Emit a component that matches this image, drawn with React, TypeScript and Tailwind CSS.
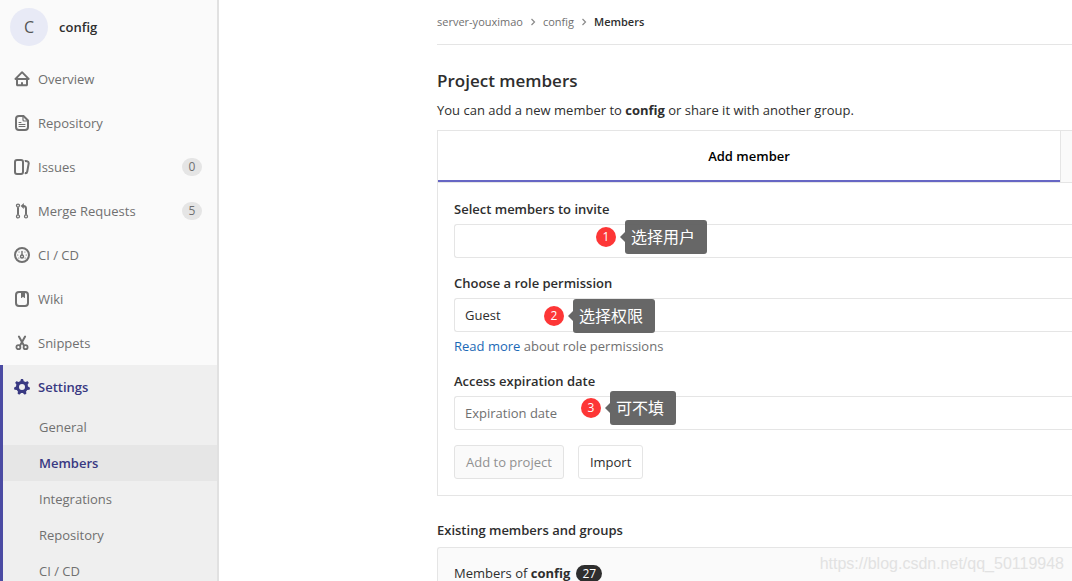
import type { ReactNode } from "react";

const icons: Record<string, ReactNode> = {
  home: (
    <path
      fill="currentColor"
      d="M3.706 7h8.725L8.069 2.585 3.706 7zM7 13.369V12a1 1 0 0 1 2 0v1.369h3V9H4v4.369h3zM14 9v4.836c0 .833-.657 1.533-1.5 1.533h-9c-.843 0-1.5-.7-1.5-1.533V9h-.448a1.1 1.1 0 0 1-.783-1.873L6.934.887a1.5 1.5 0 0 1 2.269 0l6.165 6.24A1.1 1.1 0 0 1 14.585 9H14z"
    />
  ),
  doc: (
    <g fill="none" stroke="currentColor">
      <path strokeWidth="2" d="M9.500 1H5a3 3 0 0 0-3 3v8a3 3 0 0 0 3 3h6a3 3 0 0 0 3-3V5.500z" />
      <path strokeWidth="1.200" d="M9 1.500V5a1 1 0 0 0 1 1h3.500" />
      <path strokeWidth="1" strokeLinecap="round" d="M5 7.500h2M5 9.500h6M5 11.500h6" />
    </g>
  ),
  issues: (
    <path
      fill="currentColor"
      d="M10.458 15.012l.311.055a3 3 0 0 0 3.476-2.433l1.389-7.879A3 3 0 0 0 13.2 1.28L11.23.933a3.002 3.002 0 0 0-.824-.031c.364.59.58 1.28.593 2.02l1.854.328a1 1 0 0 1 .811 1.158l-1.389 7.879a1 1 0 0 1-1.158.81l-.118-.02a3.98 3.98 0 0 1-.541 1.935zM3 0h4a3 3 0 0 1 3 3v10a3 3 0 0 1-3 3H3a3 3 0 0 1-3-3V3a3 3 0 0 1 3-3zm0 2a1 1 0 0 0-1 1v10a1 1 0 0 0 1 1h4a1 1 0 0 0 1-1V3a1 1 0 0 0-1-1H3z"
    />
  ),
  merge: (
    <g fill="none" stroke="currentColor">
      <g strokeWidth="1.300">
        <circle cx="4" cy="2.600" r="1.500" />
        <circle cx="4" cy="13.400" r="1.500" />
        <circle cx="12" cy="13.400" r="1.500" />
      </g>
      <path strokeWidth="2" d="M4 4.200v7.600M12 11.800V5.500a2.500 2.500 0 0 0-2.500-2.500H9" />
      <path fill="currentColor" stroke="none" d="M9.800 0v6L6.600 3z" />
    </g>
  ),
  gauge: (
    <g fill="none" stroke="currentColor">
      <circle cx="8" cy="8" r="7" strokeWidth="2" />
      <path strokeWidth="1.400" strokeLinecap="round" d="M8 4.500v3.200" />
      <circle cx="8" cy="9.500" r="1.500" strokeWidth="1.400" />
      <path
        strokeWidth="1.200"
        strokeLinecap="round"
        d="M3.700 8h.1M12.200 8h.1M5 5h.1M10.900 5h.1M4.800 11h.1M11.100 11h.1"
      />
    </g>
  ),
  wiki: (
    <g>
      <rect x="2" y="1" width="12" height="14" rx="3" fill="none" stroke="currentColor" strokeWidth="2" />
      <path fill="currentColor" d="M7 1h4v5.600a.4.4 0 0 1-.7.3L9 5.700 7.700 6.900A.4.4 0 0 1 7 6.600z" />
    </g>
  ),
  scissors: (
    <g fill="none" stroke="currentColor">
      <path strokeWidth="2" strokeLinecap="round" d="M4.900 1.600l4.900 8.600M11.100 1.600L6.200 10.200" />
      <circle cx="4.400" cy="12.200" r="2" strokeWidth="1.800" />
      <circle cx="11.600" cy="12.200" r="2" strokeWidth="1.800" />
    </g>
  ),
  settings: (
    <path
      fill="currentColor"
      fillRule="evenodd"
      d="M2.415 5.803L1.317 4.084A.5.5 0 0 1 1.35 3.5l.805-.994a.5.5 0 0 1 .564-.153l1.878.704a5.975 5.975 0 0 1 1.65-.797L6.885.342A.5.5 0 0 1 7.36 0h1.28a.5.5 0 0 1 .474.342l.639 1.918a5.97 5.97 0 0 1 1.65.797l1.877-.704a.5.5 0 0 1 .565.153l.805.994a.5.5 0 0 1 .032.584l-1.097 1.719c.217.551.354 1.143.399 1.76l1.731 1.058a.5.5 0 0 1 .227.54l-.288 1.246a.5.5 0 0 1-.44.385l-2.008.19a6.026 6.026 0 0 1-1.142 1.431l.265 1.995a.5.5 0 0 1-.277.516l-1.15.56a.5.5 0 0 1-.576-.1l-1.424-1.452a6.047 6.047 0 0 1-1.804 0l-1.425 1.453a.5.5 0 0 1-.576.1l-1.15-.561a.5.5 0 0 1-.276-.516l.265-1.995a6.026 6.026 0 0 1-1.143-1.43l-2.008-.191a.5.5 0 0 1-.44-.385L.058 9.16a.5.5 0 0 1 .226-.539l1.732-1.058a5.968 5.968 0 0 1 .399-1.76zM8 11a3 3 0 1 0 0-6 3 3 0 0 0 0 6z"
    />
  ),
};

function Icon({ name }: { name: string }) {
  return (
    <svg viewBox="0 0 16 16" className="size-4 shrink-0" aria-hidden="true">
      {icons[name]}
    </svg>
  );
}

const navItems = [
  { label: "Overview", icon: "home" },
  { label: "Repository", icon: "doc" },
  { label: "Issues", icon: "issues", count: 0 },
  { label: "Merge Requests", icon: "merge", count: 5 },
  { label: "CI / CD", icon: "gauge" },
  { label: "Wiki", icon: "wiki" },
  { label: "Snippets", icon: "scissors" },
];

const settingsItems = ["General", "Members", "Integrations", "Repository", "CI / CD"];

function Sidebar() {
  return (
    <aside className="w-[219px] shrink-0 border-r-2 border-[#e1e1e1] bg-[#fafafa] text-[#707070]">
      <a href="#config" className="flex h-[57px] items-start gap-[11px] px-[10px] pt-2 text-[#2e2e2e]">
        <span className="flex size-[38px] items-center justify-center rounded-full bg-[#e8eaf6] text-base text-[#555]">
          C
        </span>
        <span className="leading-[38px] font-semibold">config</span>
      </a>
      <nav>
        <ul>
          {navItems.map((item) => (
            <li key={item.label}>
              <a href="#nav" className="flex h-11 items-center gap-2 pr-[15px] pl-[14px]">
                <Icon name={item.icon} />
                <span className="flex-1">{item.label}</span>
                {item.count !== undefined && (
                  <span className="flex h-[18px] w-5 items-center justify-center rounded-full bg-[#e5e5e5] text-xs">
                    {item.count}
                  </span>
                )}
              </a>
            </li>
          ))}
          <li className="border-l-[3px] border-[#4b4ba3] bg-[#efefef]">
            <a href="#settings" className="flex h-11 items-center gap-2 pl-[11px] font-semibold text-[#393982]">
              <Icon name="settings" />
              Settings
            </a>
            <ul>
              {settingsItems.map((label) => (
                <li key={label}>
                  <a
                    href="#section"
                    className={
                      label === "Members"
                        ? "flex h-9 items-center bg-[#e6e6e6] pl-9 font-semibold text-[#393982]"
                        : "flex h-9 items-center pl-9"
                    }
                  >
                    {label}
                  </a>
                </li>
              ))}
            </ul>
          </li>
        </ul>
      </nav>
    </aside>
  );
}

function Chevron() {
  return (
    <svg viewBox="0 0 8 8" className="size-2" aria-hidden="true">
      <path d="M2.500 1l3 3-3 3" fill="none" stroke="#8a8a8a" strokeWidth="1.200" />
    </svg>
  );
}

function Callout({ step, text, place }: { step: number; text: string; place: string }) {
  return (
    <div className={`pointer-events-none absolute flex items-center ${place}`}>
      <span className="flex size-5 items-center justify-center rounded-full bg-[#fd3636] text-xs text-white">
        {step}
      </span>
      <svg viewBox="0 0 5 10" className="ml-1 h-[10px] w-[5px]" aria-hidden="true">
        <path d="M5 0v10L0 5z" fill="#666" />
      </svg>
      <span className="h-[34px] rounded-[3px] bg-[#5f5f5f]/95 pr-3 pl-[6px] text-base leading-[34px] whitespace-nowrap text-white">
        {text}
      </span>
    </div>
  );
}

const control =
  "block h-[34px] w-full appearance-none rounded-l-[3px] border border-r-0 border-[#e5e5e5] bg-white px-[10px] text-[#2e2e2e] outline-none placeholder:text-[#707070]";

export default function App() {
  return (
    <div className="flex h-screen overflow-hidden bg-white font-['Open_Sans','Noto_Sans_CJK_SC',sans-serif] text-[13px] leading-5 text-[#2e2e2e]">
      <Sidebar />
      <main className="min-w-0 flex-1 pl-[218px]">
        <nav aria-label="Breadcrumb" className="flex h-[45px] items-center gap-[6px] border-b border-[#e5e5e5] text-[11px] text-[#707070]">
          <a href="#group">server-youximao</a>
          <Chevron />
          <a href="#config">config</a>
          <Chevron />
          <a href="#members" className="font-semibold text-[#2e2e2e]">Members</a>
        </nav>

        <h1 className="mt-6 text-[17px] leading-6 font-semibold">Project members</h1>
        <p className="mt-[7px]">
          You can add a new member to <strong className="font-bold">config</strong> or share it with another group.
        </p>

        <section className="mt-[10px] border border-r-0 border-[#e5e5e5]">
          <div role="tablist" className="flex h-[52px] border-b border-[#e5e5e5]">
            <button
              type="button"
              role="tab"
              aria-selected="true"
              className="flex-1 border-b-2 border-[#6666c4] font-semibold text-black"
            >
              Add member
            </button>
            <div className="w-3 border-l border-[#e5e5e5] bg-[#fafafa]" />
          </div>
          <form className="pt-4 pb-4 pl-4">
            <label htmlFor="members" className="mb-[5px] block font-semibold">Select members to invite</label>
            <div className="relative mb-[15px]">
              <input id="members" type="text" className={control} />
              <Callout step={1} text="选择用户" place="-top-1 left-[142px]" />
            </div>
            <label htmlFor="role" className="mb-[5px] block font-semibold">Choose a role permission</label>
            <div className="relative">
              <select id="role" className={control}>
                <option>Guest</option>
              </select>
              <Callout step={2} text="选择权限" place="top-px left-[90px]" />
            </div>
            <p className="mt-1 mb-[15px] text-[#707070]">
              <a href="#permissions" className="text-[#1b69b6]">Read more</a> about role permissions
            </p>
            <label htmlFor="expires" className="mb-[5px] block font-semibold">Access expiration date</label>
            <div className="relative mb-[15px]">
              <input id="expires" type="text" placeholder="Expiration date" className={control} />
              <Callout step={3} text="可不填" place="-top-[5px] left-[127px]" />
            </div>
            <div className="flex gap-[14px]">
              <button type="submit" disabled className="h-[34px] rounded-[3px] border border-[#e3e3e3] bg-[#fafafa] px-[11px] text-[#919191]">
                Add to project
              </button>
              <button type="button" className="h-[34px] rounded-[3px] border border-[#e5e5e5] bg-white px-[11px]">
                Import
              </button>
            </div>
          </form>
        </section>

        <h2 className="mt-6 font-semibold">Existing members and groups</h2>
        <section className="relative mt-[7px] h-[50px] rounded-tl-[3px] border border-r-0 border-b-0 border-[#e5e5e5] bg-[#fafafa] pl-4">
          <h3 className="flex h-[50px] items-center gap-[6px]">
            <span>
              Members of <strong className="font-bold">config</strong>
            </span>
            <span className="rounded-full bg-[#2e2e2e] px-[6px] text-xs leading-[17px] text-white">27</span>
          </h3>
          <span className="absolute top-1 right-2 font-['Liberation_Sans',sans-serif] text-base text-[#e2e2e2]">
            https://blog.csdn.net/qq_50119948
          </span>
        </section>
      </main>
    </div>
  );
}
